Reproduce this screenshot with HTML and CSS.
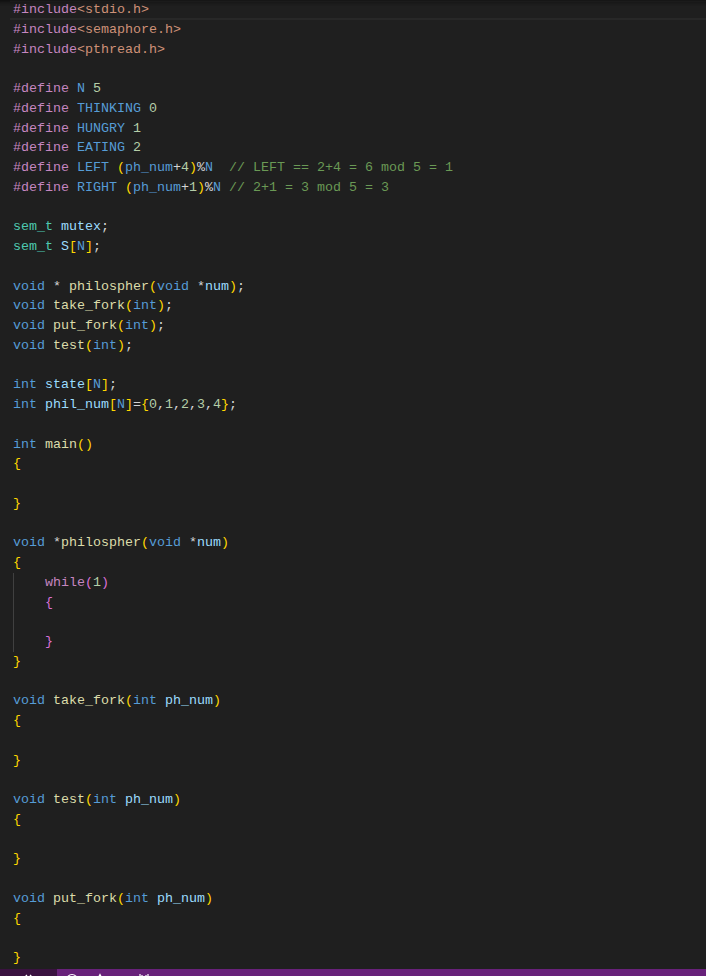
FILE: index.html
```html
<!DOCTYPE html>
<html>
<head>
<meta charset="utf-8">
<link rel="stylesheet" href="styles.css">
</head>
<body>
<div class="editor">
  <div class="code">
    <div class="line current"><span class="pp">#include</span><span class="str">&lt;stdio.h&gt;</span></div>
    <div class="line"><span class="pp">#include</span><span class="str">&lt;semaphore.h&gt;</span></div>
    <div class="line"><span class="pp">#include</span><span class="str">&lt;pthread.h&gt;</span></div>
    <div class="line"></div>
    <div class="line"><span class="pp">#define</span> <span class="mac">N</span> <span class="num">5</span></div>
    <div class="line"><span class="pp">#define</span> <span class="mac">THINKING</span> <span class="num">0</span></div>
    <div class="line"><span class="pp">#define</span> <span class="mac">HUNGRY</span> <span class="num">1</span></div>
    <div class="line"><span class="pp">#define</span> <span class="mac">EATING</span> <span class="num">2</span></div>
    <div class="line"><span class="pp">#define</span> <span class="mac">LEFT</span> <span class="b1">(</span><span class="mac">ph_num</span><span class="op">+</span><span class="num">4</span><span class="b1">)</span><span class="op">%</span><span class="mac">N</span>  <span class="cmt">// LEFT == 2+4 = 6 mod 5 = 1</span></div>
    <div class="line"><span class="pp">#define</span> <span class="mac">RIGHT</span> <span class="b1">(</span><span class="mac">ph_num</span><span class="op">+</span><span class="num">1</span><span class="b1">)</span><span class="op">%</span><span class="mac">N</span> <span class="cmt">// 2+1 = 3 mod 5 = 3</span></div>
    <div class="line"></div>
    <div class="line"><span class="ty">sem_t</span> <span class="var">mutex</span>;</div>
    <div class="line"><span class="ty">sem_t</span> <span class="var">S</span><span class="b1">[</span><span class="mac">N</span><span class="b1">]</span>;</div>
    <div class="line"></div>
    <div class="line"><span class="kw">void</span> * <span class="fn">philospher</span><span class="b1">(</span><span class="kw">void</span> *<span class="var">num</span><span class="b1">)</span>;</div>
    <div class="line"><span class="kw">void</span> <span class="fn">take_fork</span><span class="b1">(</span><span class="kw">int</span><span class="b1">)</span>;</div>
    <div class="line"><span class="kw">void</span> <span class="fn">put_fork</span><span class="b1">(</span><span class="kw">int</span><span class="b1">)</span>;</div>
    <div class="line"><span class="kw">void</span> <span class="fn">test</span><span class="b1">(</span><span class="kw">int</span><span class="b1">)</span>;</div>
    <div class="line"></div>
    <div class="line"><span class="kw">int</span> <span class="var">state</span><span class="b1">[</span><span class="mac">N</span><span class="b1">]</span>;</div>
    <div class="line"><span class="kw">int</span> <span class="var">phil_num</span><span class="b1">[</span><span class="mac">N</span><span class="b1">]</span>=<span class="b1">{</span><span class="num">0</span>,<span class="num">1</span>,<span class="num">2</span>,<span class="num">3</span>,<span class="num">4</span><span class="b1">}</span>;</div>
    <div class="line"></div>
    <div class="line"><span class="kw">int</span> <span class="fn">main</span><span class="b1">()</span></div>
    <div class="line"><span class="b1">{</span></div>
    <div class="line"></div>
    <div class="line"><span class="b1">}</span></div>
    <div class="line"></div>
    <div class="line"><span class="kw">void</span> *<span class="fn">philospher</span><span class="b1">(</span><span class="kw">void</span> *<span class="var">num</span><span class="b1">)</span></div>
    <div class="line"><span class="b1">{</span></div>
    <div class="indent">
      <div class="line"><span class="ctl">while</span><span class="b2">(</span><span class="num">1</span><span class="b2">)</span></div>
      <div class="line"><span class="b2">{</span></div>
      <div class="line"></div>
      <div class="line"><span class="b2">}</span></div>
    </div>
    <div class="line"><span class="b1">}</span></div>
    <div class="line"></div>
    <div class="line"><span class="kw">void</span> <span class="fn">take_fork</span><span class="b1">(</span><span class="kw">int</span> <span class="var">ph_num</span><span class="b1">)</span></div>
    <div class="line"><span class="b1">{</span></div>
    <div class="line"></div>
    <div class="line"><span class="b1">}</span></div>
    <div class="line"></div>
    <div class="line"><span class="kw">void</span> <span class="fn">test</span><span class="b1">(</span><span class="kw">int</span> <span class="var">ph_num</span><span class="b1">)</span></div>
    <div class="line"><span class="b1">{</span></div>
    <div class="line"></div>
    <div class="line"><span class="b1">}</span></div>
    <div class="line"></div>
    <div class="line"><span class="kw">void</span> <span class="fn">put_fork</span><span class="b1">(</span><span class="kw">int</span> <span class="var">ph_num</span><span class="b1">)</span></div>
    <div class="line"><span class="b1">{</span></div>
    <div class="line"></div>
    <div class="line"><span class="b1">}</span></div>
  </div>
  <div class="scroll-shadow"></div>
</div>
<div class="statusbar">
  <div class="remote">
    <svg width="16" height="16" viewBox="0 0 16 16"><path d="M2 7 L6 3 M9 3 L13 7 M2 9 L6 13 M9 13 L13 9" stroke="#fff" stroke-width="1.3" fill="none"/></svg>
  </div>
  <div class="items">
    <svg class="err" width="14" height="14" viewBox="0 0 14 14"><circle cx="7" cy="7" r="5.5" stroke="#fff" stroke-width="1.2" fill="none"/></svg>
    <svg class="warn" width="14" height="14" viewBox="0 0 14 14"><path d="M7 1.5 L13 12.5 H1 Z" stroke="#fff" stroke-width="1.2" fill="none"/></svg>
    <svg class="ports" width="16" height="14" viewBox="0 0 16 14"><path d="M4 1 L4 4 M12 1 L12 4 M6 2 L6 5 M10 2 L10 5" stroke="#fff" stroke-width="1.2" fill="none"/><circle cx="8" cy="8" r="2" fill="#fff"/></svg>
  </div>
</div>
</body>
</html>
```
FILE: styles.css
```css
html, body {
  margin: 0;
  padding: 0;
  background: #1f1f1f;
  height: 976px;
  overflow: hidden;
}

.editor {
  position: relative;
  height: 969px;
  overflow: hidden;
  background: #1f1f1f;
}

.code {
  padding-left: 13px;
  font-family: "Liberation Mono", "DejaVu Sans Mono", monospace;
  font-size: 13.333px;
  color: #d4d4d4;
}

.line {
  height: 19.75px;
  line-height: 19.75px;
  white-space: pre;
}

.line.current {
  margin-left: -3px;
  padding-left: 3px;
  box-shadow: inset 0 -2px 0 #282828, inset 0 2px 0 #282828;
}

.indent {
  border-left: 1px solid #404040;
  padding-left: 31px;
}

.scroll-shadow {
  position: absolute;
  left: 0;
  right: 0;
  top: 0;
  height: 6px;
  box-shadow: #000 0 6px 6px -6px inset;
  pointer-events: none;
}

.pp { color: #c586c0; }
.str { color: #ce9178; }
.mac { color: #569cd6; }
.num { color: #b5cea8; }
.op { color: #d4d4d4; }
.cmt { color: #6a9955; }
.ty { color: #4ec9b0; }
.var { color: #9cdcfe; }
.fn { color: #dcdcaa; }
.kw { color: #569cd6; }
.ctl { color: #c586c0; }
.b1 { color: #ffd700; }
.b2 { color: #da70d6; }

.statusbar {
  display: flex;
  height: 22px;
  background: #68217a;
}

.remote {
  width: 57px;
  background: #3a1240;
  display: flex;
  align-items: center;
  justify-content: center;
}

.items {
  display: flex;
  align-items: center;
  padding-left: 8px;
}

.items .warn {
  margin-left: 14px;
}

.items .ports {
  margin-left: 29px;
}
```
